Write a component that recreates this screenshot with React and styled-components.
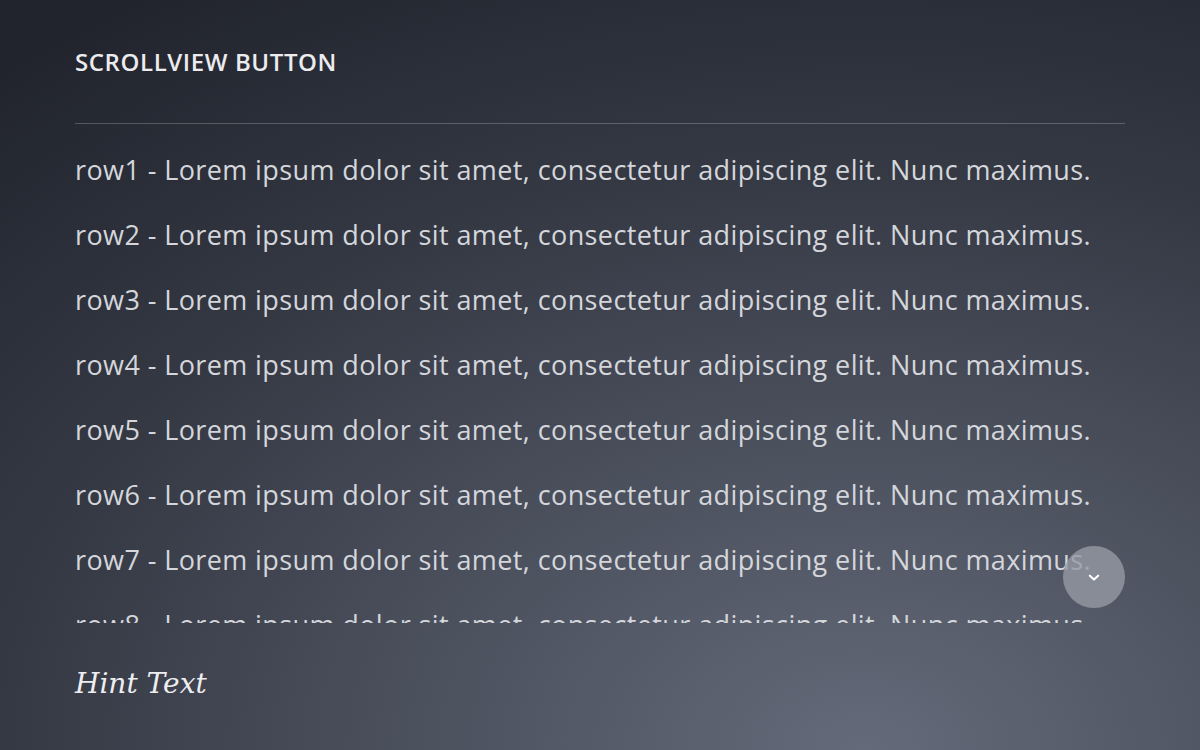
import styled, { createGlobalStyle } from "styled-components";

const rows = Array.from({ length: 12 }, (_, i) => i + 1);

export default function App() {
  return (
    <>
      <GlobalStyle />
      <Screen>
        <Title>Scrollview Button</Title>
        <Divider />
        <ScrollFrame>
          <ScrollArea>
            {rows.map((n) => (
              <Row key={n}>
                row{n} - Lorem ipsum dolor sit amet, consectetur adipiscing elit. Nunc maximus.
              </Row>
            ))}
          </ScrollArea>
          <ScrollButton type="button" aria-label="Scroll down">
            <svg width="20" height="20" viewBox="0 0 24 24" fill="none">
              <path
                d="M7 10.5l5 4.5 5-4.5"
                stroke="#fff"
                strokeWidth="2.6"
                strokeLinecap="round"
                strokeLinejoin="round"
              />
            </svg>
          </ScrollButton>
        </ScrollFrame>
        <Hint>Hint Text</Hint>
      </Screen>
    </>
  );
}

const GlobalStyle = createGlobalStyle`
  html, body {
    margin: 0;
    padding: 0;
  }
  body {
    font-family: "Open Sans", "Noto Sans", sans-serif;
  }
`;

const Screen = styled.div`
  width: 1200px;
  height: 750px;
  box-sizing: border-box;
  padding: 0 75px;
  display: flex;
  flex-direction: column;
  overflow: hidden;
  background: radial-gradient(
    ellipse 110% 120% at 72% 100%,
    #646a79 0%,
    #4b505d 35%,
    #353944 65%,
    #21242d 100%
  );
`;

const Title = styled.h1`
  margin: 0;
  padding-top: 47px;
  height: 30px;
  font-size: 24px;
  line-height: 30px;
  font-weight: 600;
  text-transform: uppercase;
  letter-spacing: 0.6px;
  color: #ececef;
`;

const Divider = styled.div`
  margin-top: 46px;
  height: 1px;
  background: rgba(255, 255, 255, 0.22);
`;

const ScrollFrame = styled.div`
  position: relative;
  margin-top: 13px;
`;

const ScrollArea = styled.div`
  height: 486px;
  overflow: hidden;
  display: flex;
  flex-direction: column;
`;

const Row = styled.div`
  flex: none;
  height: 65px;
  line-height: 65px;
  font-size: 27px;
  letter-spacing: 0.4px;
  white-space: nowrap;
  color: #d4d6db;
`;

const ScrollButton = styled.button`
  position: absolute;
  right: 0;
  top: 409px;
  width: 62px;
  height: 62px;
  border-radius: 50%;
  border: none;
  padding: 0;
  display: flex;
  align-items: center;
  justify-content: center;
  background: rgba(150, 154, 164, 0.8);
`;

const Hint = styled.div`
  margin-top: 41px;
  font-family: "DejaVu Serif", "Liberation Serif", serif;
  font-style: italic;
  font-size: 28px;
  line-height: 40px;
  color: #eeeef0;
`;
